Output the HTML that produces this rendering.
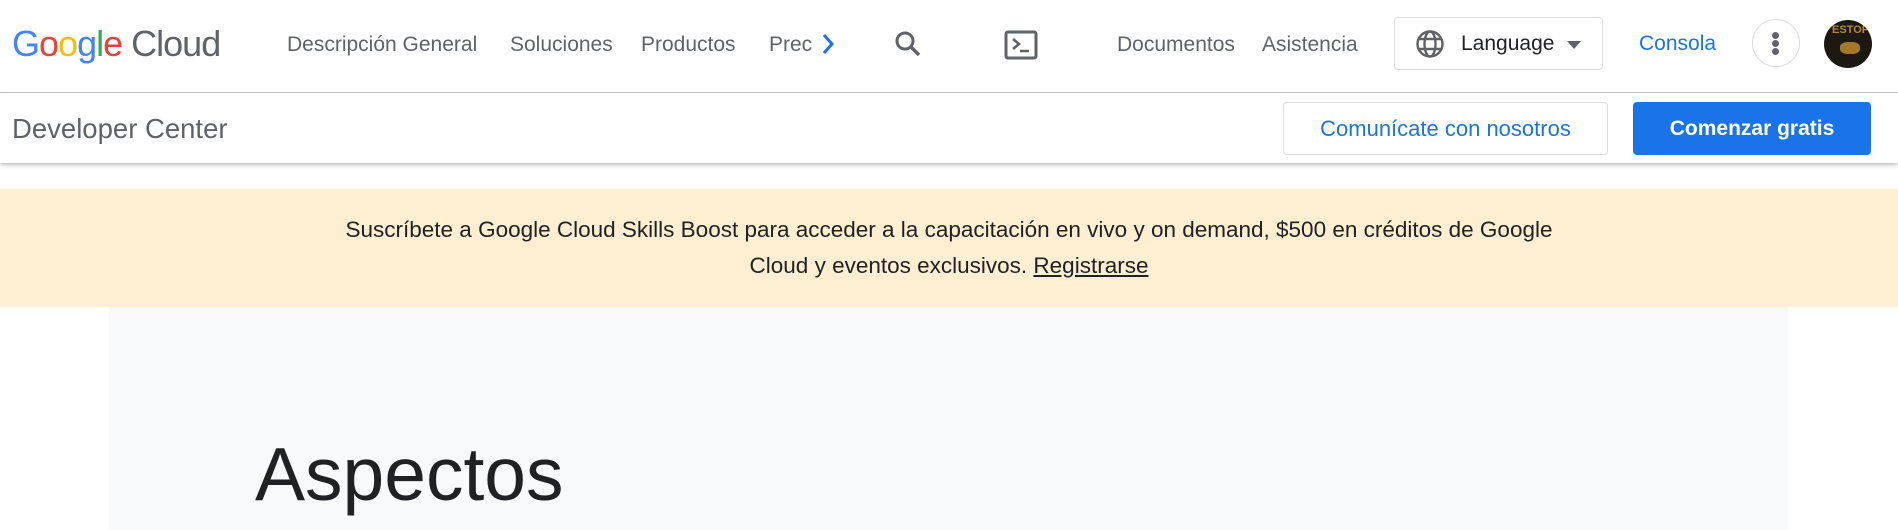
<!DOCTYPE html>
<html><head><meta charset="utf-8"><style>
*{margin:0;padding:0;box-sizing:border-box}
body{width:1898px;height:530px;overflow:hidden;background:#fff;font-family:"Liberation Sans",Arial,sans-serif;position:relative}
.a{position:absolute;white-space:nowrap}
.nav{font-size:21px;color:#5f6368;top:33px}
</style></head><body>
<div class="a" style="left:12px;top:23px;font-size:36px;letter-spacing:-1px"><span style="color:#4285f4">G</span><span style="color:#ea4335">o</span><span style="color:#fbbc04">o</span><span style="color:#4285f4">g</span><span style="color:#34a853">l</span><span style="color:#ea4335">e</span> <span style="color:#5f6368">Cloud</span></div>
<div class="a nav" style="left:287px">Descripción General</div>
<div class="a nav" style="left:510px">Soluciones</div>
<div class="a nav" style="left:641px">Productos</div>
<div class="a nav" style="left:769px">Prec</div>
<svg class="a" style="left:820px;top:32px" width="16" height="24" viewBox="0 0 16 24"><path d="M4 3l8 9-8 9" stroke="#1a73e8" stroke-width="3" fill="none"/></svg>
<svg class="a" style="left:893px;top:29px" width="30" height="30" viewBox="0 0 30 30"><circle cx="12" cy="12" r="8" stroke="#5f6368" stroke-width="3" fill="none"/><path d="M18 18l8 8" stroke="#5f6368" stroke-width="3.5"/></svg>
<svg class="a" style="left:1004px;top:30px" width="34" height="30" viewBox="0 0 34 30"><rect x="2" y="2" width="30" height="26" rx="2" stroke="#5f6368" stroke-width="3" fill="none"/><path d="M9 9l6 5-6 5M16 21h9" stroke="#5f6368" stroke-width="2.6" fill="none"/></svg>
<div class="a nav" style="left:1117px">Documentos</div>
<div class="a nav" style="left:1262px">Asistencia</div>
<div class="a" style="left:1394px;top:17px;width:209px;height:53px;border:1px solid #dadce0;border-radius:4px"></div>
<svg class="a" style="left:1415px;top:29px" width="30" height="30" viewBox="0 0 30 30" fill="none" stroke="#5f6368" stroke-width="2.4"><circle cx="15" cy="15" r="12.5"/><ellipse cx="15" cy="15" rx="5.5" ry="12.5"/><path d="M3 10h24M3 20h24"/></svg>
<div class="a" style="left:1461px;top:32px;font-size:21px;color:#202124">Language</div>
<svg class="a" style="left:1566px;top:40px" width="16" height="10"><path d="M1 1h14l-7 8z" fill="#5f6368"/></svg>
<div class="a" style="left:1639px;top:32px;font-size:21px;color:#1a73e8">Consola</div>
<div class="a" style="left:1752px;top:19px;width:48px;height:48px;border:1px solid #dadce0;border-radius:50%"></div>
<div class="a" style="left:1772px;top:32px;width:7px;height:7px;border-radius:50%;background:#5f6368;box-shadow:0 8px 0 #5f6368,0 16px 0 #5f6368"></div>
<div class="a" style="left:1824px;top:20px;width:48px;height:48px;border-radius:50%;background:#1c1812;overflow:hidden"><div style="position:absolute;left:8px;top:4px;font-size:11px;color:#b58a2e;font-weight:bold">ESTOPA</div><div style="position:absolute;left:16px;top:22px;width:20px;height:12px;background:#a07a2a;border-radius:40%"></div></div>
<div class="a" style="left:0;top:92px;width:1898px;height:1px;background:#c8c8c8"></div>
<div class="a" style="left:0;top:93px;width:1898px;height:70px;background:#fff;box-shadow:0 2px 4px rgba(0,0,0,.25)"></div>
<div class="a" style="left:12px;top:113px;font-size:27.5px;color:#5f6368">Developer Center</div>
<div class="a" style="left:1283px;top:102px;width:325px;height:53px;border:1px solid #dadce0;border-radius:4px;color:#1a73e8;font-size:22px;text-align:center;line-height:51px">Comunícate con nosotros</div>
<div class="a" style="left:1633px;top:102px;width:238px;height:53px;background:#1a73e8;border-radius:4px;color:#fff;font-size:21px;font-weight:bold;text-align:center;line-height:53px">Comenzar gratis</div>
<div class="a" style="left:0;top:189px;width:1898px;height:118px;background:#feefd2;text-align:center;font-size:22.5px;color:#202124;line-height:36px;padding-top:23px;white-space:normal">Suscríbete a Google Cloud Skills Boost para acceder a la capacitación en vivo y on demand, $500 en créditos de Google<br>Cloud y eventos exclusivos. <u>Registrarse</u></div>
<div class="a" style="left:109px;top:307px;width:1679px;height:223px;background:#f8f9fa"></div>
<div class="a" style="left:255px;top:431px;font-size:75px;color:#202124">Aspectos</div>
</body></html>
